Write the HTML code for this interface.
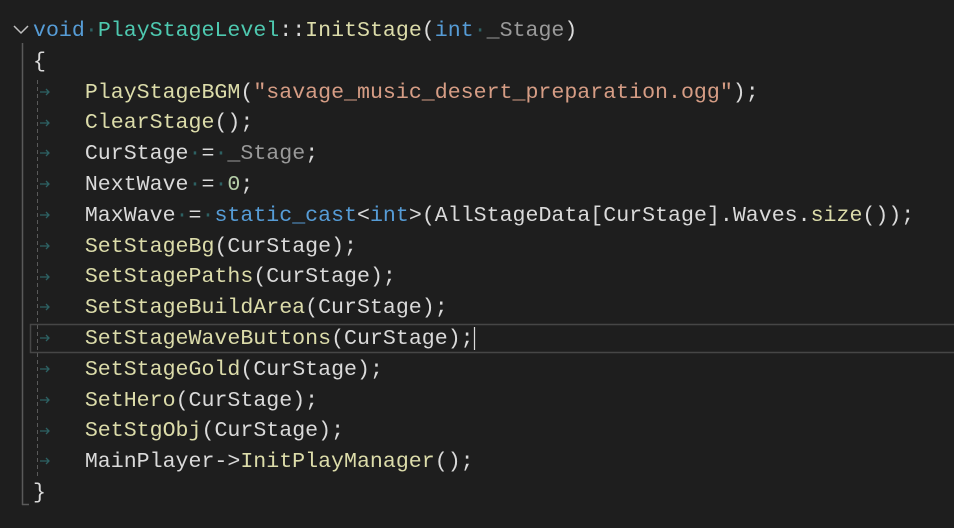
<!DOCTYPE html>
<html><head><meta charset="utf-8"><style>
html,body{margin:0;padding:0;background:#1e1e1e;width:954px;height:528px;overflow:hidden}
#code{position:absolute;left:33px;top:16px;font-family:"Liberation Mono",monospace;font-size:21.6px;line-height:30.8px;color:#dadada;white-space:pre}
.k{color:#569cd6}.t{color:#4ec9b0}.f{color:#dcdcaa}.s{color:#d69d85}.n{color:#b5cea8}.p{color:#9a9a9a}.d{color:#2d6163}
</style></head><body>
<svg width="954" height="528" style="position:absolute;left:0;top:0">
<polyline points="14,26 21,33 28,26" fill="none" stroke="#c0c0c0" stroke-width="1.5"/>
<line x1="22.5" y1="43" x2="22.5" y2="505" stroke="#5a5a5a" stroke-width="1.5"/>
<line x1="22" y1="504.5" x2="29" y2="504.5" stroke="#5a5a5a" stroke-width="1.5"/>
<line x1="37.5" y1="80" x2="37.5" y2="478" stroke="#5a5a5a" stroke-width="1" stroke-dasharray="4,3"/>
<rect x="30.5" y="324.5" width="930" height="28" fill="none" stroke="#464646" stroke-width="1.5"/>
<line x1="474.5" y1="327" x2="474.5" y2="350" stroke="#dadada" stroke-width="1.2"/>
</svg>
<div id="code"><span class="k">void</span><span class="d">·</span><span class="t">PlayStageLevel</span>::<span class="f">InitStage</span>(<span class="k">int</span><span class="d">·</span><span class="p">_Stage</span>)
{
    <span class="f">PlayStageBGM</span>(<span class="s">"savage_music_desert_preparation.ogg"</span>);
    <span class="f">ClearStage</span>();
    CurStage<span class="d">·</span>=<span class="d">·</span><span class="p">_Stage</span>;
    NextWave<span class="d">·</span>=<span class="d">·</span><span class="n">0</span>;
    MaxWave<span class="d">·</span>=<span class="d">·</span><span class="k">static_cast</span>&lt;<span class="k">int</span>&gt;(AllStageData[CurStage].Waves.<span class="f">size</span>());
    <span class="f">SetStageBg</span>(CurStage);
    <span class="f">SetStagePaths</span>(CurStage);
    <span class="f">SetStageBuildArea</span>(CurStage);
    <span class="f">SetStageWaveButtons</span>(CurStage);
    <span class="f">SetStageGold</span>(CurStage);
    <span class="f">SetHero</span>(CurStage);
    <span class="f">SetStgObj</span>(CurStage);
    MainPlayer-&gt;<span class="f">InitPlayManager</span>();
}</div>
<svg width="954" height="528" style="position:absolute;left:0;top:0">
<g stroke="#2d6163" stroke-width="1.3" fill="none">
<path d="M40 92h9M46 89l3 3-3 3"/>
<path d="M40 123h9M46 120l3 3-3 3"/>
<path d="M40 153h9M46 150l3 3-3 3"/>
<path d="M40 184h9M46 181l3 3-3 3"/>
<path d="M40 215h9M46 212l3 3-3 3"/>
<path d="M40 246h9M46 243l3 3-3 3"/>
<path d="M40 277h9M46 274l3 3-3 3"/>
<path d="M40 307h9M46 304l3 3-3 3"/>
<path d="M40 338h9M46 335l3 3-3 3"/>
<path d="M40 369h9M46 366l3 3-3 3"/>
<path d="M40 400h9M46 397l3 3-3 3"/>
<path d="M40 431h9M46 428l3 3-3 3"/>
<path d="M40 461h9M46 458l3 3-3 3"/>
</g>
</svg>
</body></html>
